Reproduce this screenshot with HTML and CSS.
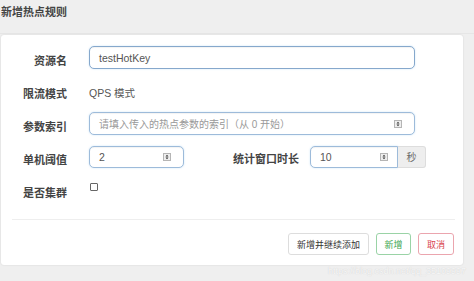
FILE: index.html
```html
<!DOCTYPE html>
<html>
<head>
    <title>新增热点规则</title>
    <link rel="stylesheet" href="styles.css">
</head>
<body>
    <!-- 标题 -->
    <div class="modal-header">
        <h4>新增热点规则</h4>
    </div>

    <div class="modal-body">
        <div class="form">
            <label class="label">资源名</label>
            <div class="field">
                <div class="input wide focus">testHotKey</div>
            </div>

            <label class="label">限流模式</label>
            <div class="field">
                <span class="static">QPS 模式</span>
            </div>

            <label class="label">参数索引</label>
            <div class="field">
                <div class="input wide">
                    <span class="placeholder">请填入传入的热点参数的索引（从 0 开始）</span>
                    <svg class="spin" width="8" height="8" viewBox="0 0 8 8">
                        <rect x="0.5" y="0.5" width="7" height="7" fill="#eee" stroke="#b5b5b5"/>
                        <path d="M2.5 3.4 L4 1.8 L5.5 3.4 Z M2.5 4.6 L4 6.2 L5.5 4.6 Z" fill="#333"/>
                    </svg>
                </div>
            </div>

            <label class="label">单机阈值</label>
            <div class="field">
                <div class="input small">
                    <span>2</span>
                    <svg class="spin" width="8" height="8" viewBox="0 0 8 8">
                        <rect x="0.5" y="0.5" width="7" height="7" fill="#eee" stroke="#b5b5b5"/>
                        <path d="M2.5 3.4 L4 1.8 L5.5 3.4 Z M2.5 4.6 L4 6.2 L5.5 4.6 Z" fill="#333"/>
                    </svg>
                </div>
                <label class="label inline">统计窗口时长</label>
                <div class="input-group">
                    <div class="input grouped">
                        <span>10</span>
                        <svg class="spin" width="8" height="8" viewBox="0 0 8 8">
                            <rect x="0.5" y="0.5" width="7" height="7" fill="#eee" stroke="#b5b5b5"/>
                            <path d="M2.5 3.4 L4 1.8 L5.5 3.4 Z M2.5 4.6 L4 6.2 L5.5 4.6 Z" fill="#333"/>
                        </svg>
                    </div>
                    <span class="addon">秒</span>
                </div>
            </div>

            <label class="label">是否集群</label>
            <div class="field top">
                <span class="checkbox"></span>
            </div>
        </div>

        <div class="divider"></div>

        <!-- 按钮区域 -->
        <div class="footer">
            <button class="btn">新增并继续添加</button>
            <button class="btn success">新增</button>
            <button class="btn danger">取消</button>
        </div>
    </div>

    <div class="watermark">https://blog.csdn.net/qq_35109997</div>
</body>
</html>
```

FILE: styles.css
```css
/* 样式定义 */
body {
    background-color: #EFEFEF;
    margin: 0;
    padding: 0;
    font-family: "Liberation Sans", "Noto Sans CJK SC", sans-serif;
    color: #333;
    width: 474px;
    height: 281px;
    overflow: hidden;
}

.modal-header {
    height: 34px;
    border-bottom: 1px solid #E6E6E6;
    box-sizing: border-box;
}

.modal-header h4 {
    margin: 0;
    padding: 5px 0 0 1px;
    font-size: 11px;
    line-height: 14px;
    font-weight: bold;
    color: #444;
}

.modal-body {
    margin: 1px 0 0 1px;
    width: 462px;
    height: 230px;
    background: #fff;
    border-radius: 3px;
    box-shadow: 0 0 2px rgba(0,0,0,0.12);
    box-sizing: border-box;
    padding-top: 11px;
}

.form {
    display: grid;
    grid-template-columns: 66px 1fr;
    column-gap: 22px;
    row-gap: 10px;
    grid-auto-rows: 23px;
}

.label {
    justify-self: end;
    align-self: center;
    margin-top: 5px;
    font-size: 11px;
    font-weight: bold;
    color: #444;
    white-space: nowrap;
}

.label.inline {
    margin: 3px 11px 0 49px;
}

.field {
    display: flex;
    align-items: center;
}

.field.top {
    align-items: flex-start;
    padding-top: 5px;
}

.static {
    font-size: 10.5px;
    color: #555;
    margin-top: 3px;
}

.input {
    height: 23px;
    box-sizing: border-box;
    border: 1px solid #9DBBDA;
    border-radius: 5px;
    padding: 0 12px 0 9px;
    display: flex;
    align-items: center;
    justify-content: space-between;
    font-size: 10.5px;
    color: #555;
    background: #fff;
    box-shadow: inset 0 1px 1px rgba(0,0,0,0.05), 0 0 2px rgba(102,175,233,0.35);
}

.input.wide {
    width: 326px;
}

.input.focus {
    border-color: #86A8CC;
    justify-content: flex-start;
}

.input.small {
    width: 95px;
    height: 22px;
}

.placeholder {
    color: #999;
    font-size: 10px;
}

.spin {
    display: block;
    flex: none;
}

.input-group {
    display: flex;
    margin-top: 0;
}

.input.grouped {
    width: 88px;
    height: 22px;
    border-radius: 5px 0 0 5px;
    padding-right: 9px;
}

.addon {
    width: 28px;
    height: 22px;
    box-sizing: border-box;
    background: #EEE;
    border: 1px solid #DDD;
    border-left: none;
    border-radius: 0 3px 3px 0;
    font-size: 10px;
    color: #666;
    display: flex;
    align-items: center;
    justify-content: center;
}

.checkbox {
    width: 8px;
    height: 8px;
    border: 1px solid #666;
    border-radius: 1px;
    box-sizing: border-box;
    margin-left: 1px;
}

.divider {
    margin: 18px 8px 0 11px;
    border-top: 1px solid #EEE;
}

.footer {
    display: flex;
    justify-content: flex-end;
    gap: 7px;
    padding: 13px 9px 0 0;
}

.btn {
    height: 22px;
    box-sizing: border-box;
    padding: 0 8px;
    font-family: "Liberation Sans", "Noto Sans CJK SC", sans-serif;
    font-size: 9px;
    background: #fff;
    border: 1px solid #DDD;
    border-radius: 3px;
    color: #333;
}

.btn.success {
    width: 35px;
    padding: 0;
    border-color: #9AD3A6;
    color: #3DA64F;
}

.btn.danger {
    width: 36px;
    padding: 0;
    border-color: #EBA5AE;
    color: #D9434F;
}

.watermark {
    text-align: right;
    padding: 1px 8px 0 0;
    font-size: 9px;
    color: #F7F7F7;
    text-shadow: 0 0 1px #C8C8C8;
}
```
